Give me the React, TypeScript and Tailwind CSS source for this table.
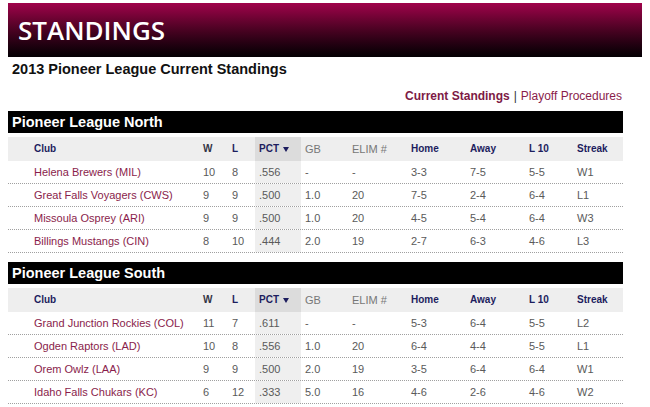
import React from "react";

type Team = {
  club: string;
  w: number;
  l: number;
  pct: string;
  gb: string;
  elim: string;
  home: string;
  away: string;
  l10: string;
  streak: string;
};

const DIVISIONS: { name: string; teams: Team[] }[] = [
  {
    name: "Pioneer League North",
    teams: [
      { club: "Helena Brewers (MIL)", w: 10, l: 8, pct: ".556", gb: "-", elim: "-", home: "3-3", away: "7-5", l10: "5-5", streak: "W1" },
      { club: "Great Falls Voyagers (CWS)", w: 9, l: 9, pct: ".500", gb: "1.0", elim: "20", home: "7-5", away: "2-4", l10: "6-4", streak: "L1" },
      { club: "Missoula Osprey (ARI)", w: 9, l: 9, pct: ".500", gb: "1.0", elim: "20", home: "4-5", away: "5-4", l10: "6-4", streak: "W3" },
      { club: "Billings Mustangs (CIN)", w: 8, l: 10, pct: ".444", gb: "2.0", elim: "19", home: "2-7", away: "6-3", l10: "4-6", streak: "L3" },
    ],
  },
  {
    name: "Pioneer League South",
    teams: [
      { club: "Grand Junction Rockies (COL)", w: 11, l: 7, pct: ".611", gb: "-", elim: "-", home: "5-3", away: "6-4", l10: "5-5", streak: "L2" },
      { club: "Ogden Raptors (LAD)", w: 10, l: 8, pct: ".556", gb: "1.0", elim: "20", home: "6-4", away: "4-4", l10: "5-5", streak: "L1" },
      { club: "Orem Owlz (LAA)", w: 9, l: 9, pct: ".500", gb: "2.0", elim: "19", home: "3-5", away: "6-4", l10: "6-4", streak: "W1" },
      { club: "Idaho Falls Chukars (KC)", w: 6, l: 12, pct: ".333", gb: "5.0", elim: "16", home: "4-6", away: "2-6", l10: "4-6", streak: "W2" },
    ],
  },
];

const COLS = "grid grid-cols-[192px_29px_26px_46px_47px_59px_59px_59px_48px_50px]";

function Division({ name, teams }: { name: string; teams: Team[] }) {
  return (
    <div className="w-[615px]">
      <div className="h-[22px] bg-black pl-[4px] text-[14.5px] font-bold leading-[22px] text-white">{name}</div>

      <div className={`${COLS} mt-[4px] h-[24px] items-stretch bg-[#eeeeee] text-[10px] leading-[24px]`}>
        <div className="pl-[26px] font-bold text-[#1d1d5e]">Club</div>
        <div className="pl-[3px] font-bold text-[#333344]">W</div>
        <div className="pl-[3px] font-bold text-[#1d1d5e]">L</div>
        <div className="flex items-center gap-[4px] bg-[#dcdcdc] pl-[4px] font-bold text-[#1d1d5e]">
          PCT
          <svg width="6" height="5" viewBox="0 0 6 5">
            <path d="M0 0h6L3 5z" fill="#1d1d5e" />
          </svg>
        </div>
        <div className="pl-[4px] text-[11px] text-[#777777]">GB</div>
        <div className="pl-[4px] text-[11px] text-[#777777]">ELIM #</div>
        <div className="pl-[4px] font-bold text-[#1d1d5e]">Home</div>
        <div className="pl-[4px] font-bold text-[#1d1d5e]">Away</div>
        <div className="pl-[4px] font-bold text-[#1d1d5e]">L 10</div>
        <div className="pl-[4px] font-bold text-[#1d1d5e]">Streak</div>
      </div>

      {teams.map((t) => (
        <div
          key={t.club}
          className={`${COLS} h-[23px] border-b border-dotted border-[#a0a0a0] text-[11px] leading-[22px] text-[#5a5a5a]`}
        >
          <div className="pl-[26px] text-[#8a1d4b]">{t.club}</div>
          <div className="pl-[3px]">{t.w}</div>
          <div className="pl-[3px]">{t.l}</div>
          <div className="bg-[#efefef] pl-[4px]">{t.pct}</div>
          <div className="pl-[4px]">{t.gb}</div>
          <div className="pl-[4px]">{t.elim}</div>
          <div className="pl-[4px]">{t.home}</div>
          <div className="pl-[4px]">{t.away}</div>
          <div className="pl-[4px]">{t.l10}</div>
          <div className="pl-[4px]">{t.streak}</div>
        </div>
      ))}
    </div>
  );
}

export default function App() {
  return (
    <div className="h-[407px] w-[650px] overflow-hidden bg-white px-[8px] pt-[3px] font-['Liberation_Sans',Arial,sans-serif]">
      <div className="flex h-[54px] w-[634px] items-center bg-gradient-to-b from-[#a1034b] via-[#4a0222] to-[#050004] pl-[10px]">
        <h1 className="font-['Open_Sans',sans-serif] text-[26px] font-semibold text-white">STANDINGS</h1>
      </div>

      <h2 className="mt-[3px] h-[18px] pl-[4px] text-[14.5px] font-bold leading-[18px] text-[#111111]">
        2013 Pioneer League Current Standings
      </h2>

      <div className="mt-[9px] flex h-[18px] w-[614px] justify-end text-[12px] leading-[18px]">
        <a className="font-bold text-[#7d1a45]">Current Standings</a>
        <span className="px-[4px] text-[#333333]">|</span>
        <a className="text-[#8a1d4b]">Playoff Procedures</a>
      </div>

      <div className="mt-[6px] flex flex-col gap-[9px]">
        {DIVISIONS.map((d) => (
          <Division key={d.name} name={d.name} teams={d.teams} />
        ))}
      </div>
    </div>
  );
}
